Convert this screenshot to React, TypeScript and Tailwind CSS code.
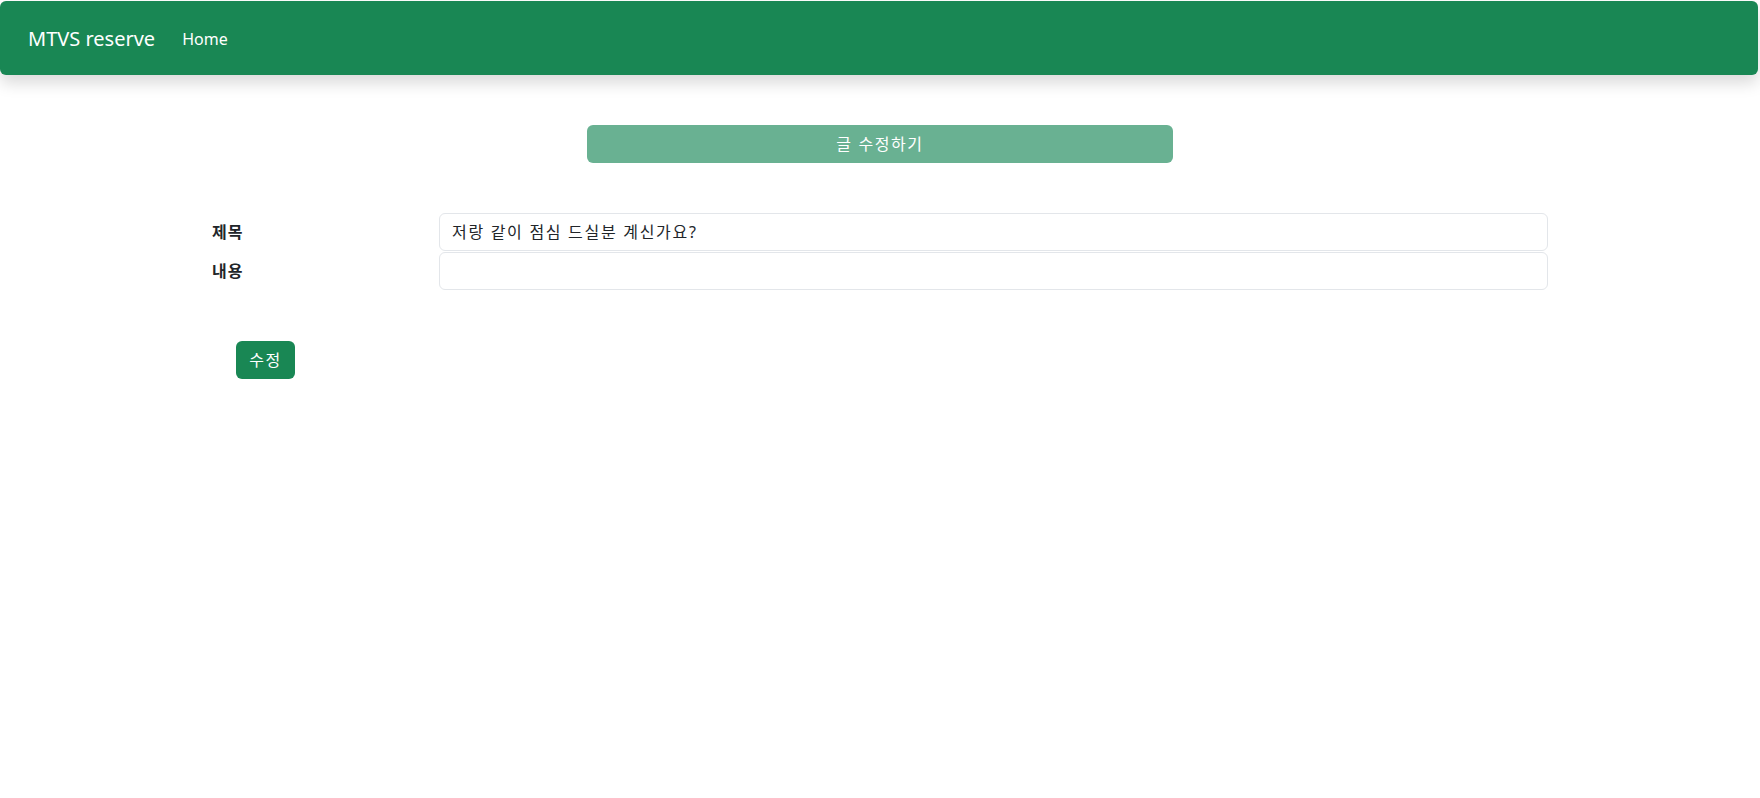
export default function App() {
  const font = { fontFamily: '"Noto Sans", "Noto Sans CJK KR", sans-serif' };
  return (
    <div className="min-h-[798px] bg-white text-[#212529]" style={font}>
      <nav className="mt-px h-[74px] w-[1758px] rounded-md bg-[#198754] shadow-[0_8px_16px_rgba(0,0,0,0.15)] flex items-center pl-[28px] pt-[2px]">
        <span className="text-white text-[20px] leading-none">MTVS reserve</span>
        <span className="text-white text-[16px] leading-none ml-[27px]">Home</span>
      </nav>
      <div className="flex justify-center mt-[50px]">
        <div className="w-[586px] h-[38px] rounded-md bg-[#69b192] text-white text-[16px] tracking-[1.6px] flex items-center justify-center">
          글 수정하기
        </div>
      </div>
      <div className="ml-[212px] w-[1336px] mt-[50px]">
        <div className="flex items-center h-[38px]">
          <div className="w-[227px] font-bold text-[16px] tracking-[1px]">제목</div>
          <div className="flex-1 h-[38px] rounded-md border border-[#e3e6ea] flex items-center px-[12px] text-[16px] tracking-[1.7px]">
            저랑 같이 점심 드실분 계신가요?
          </div>
        </div>
        <div className="flex items-center h-[38px] mt-px">
          <div className="w-[227px] font-bold text-[16px] tracking-[1px]">내용</div>
          <div className="flex-1 h-[38px] rounded-md border border-[#e3e6ea]"></div>
        </div>
        <div className="mt-[51px] pl-[24px]">
          <button className="h-[38px] w-[59px] rounded-md bg-[#198754] text-white text-[16px] tracking-[1.5px] flex items-center justify-center">
            수정
          </button>
        </div>
      </div>
    </div>
  );
}
